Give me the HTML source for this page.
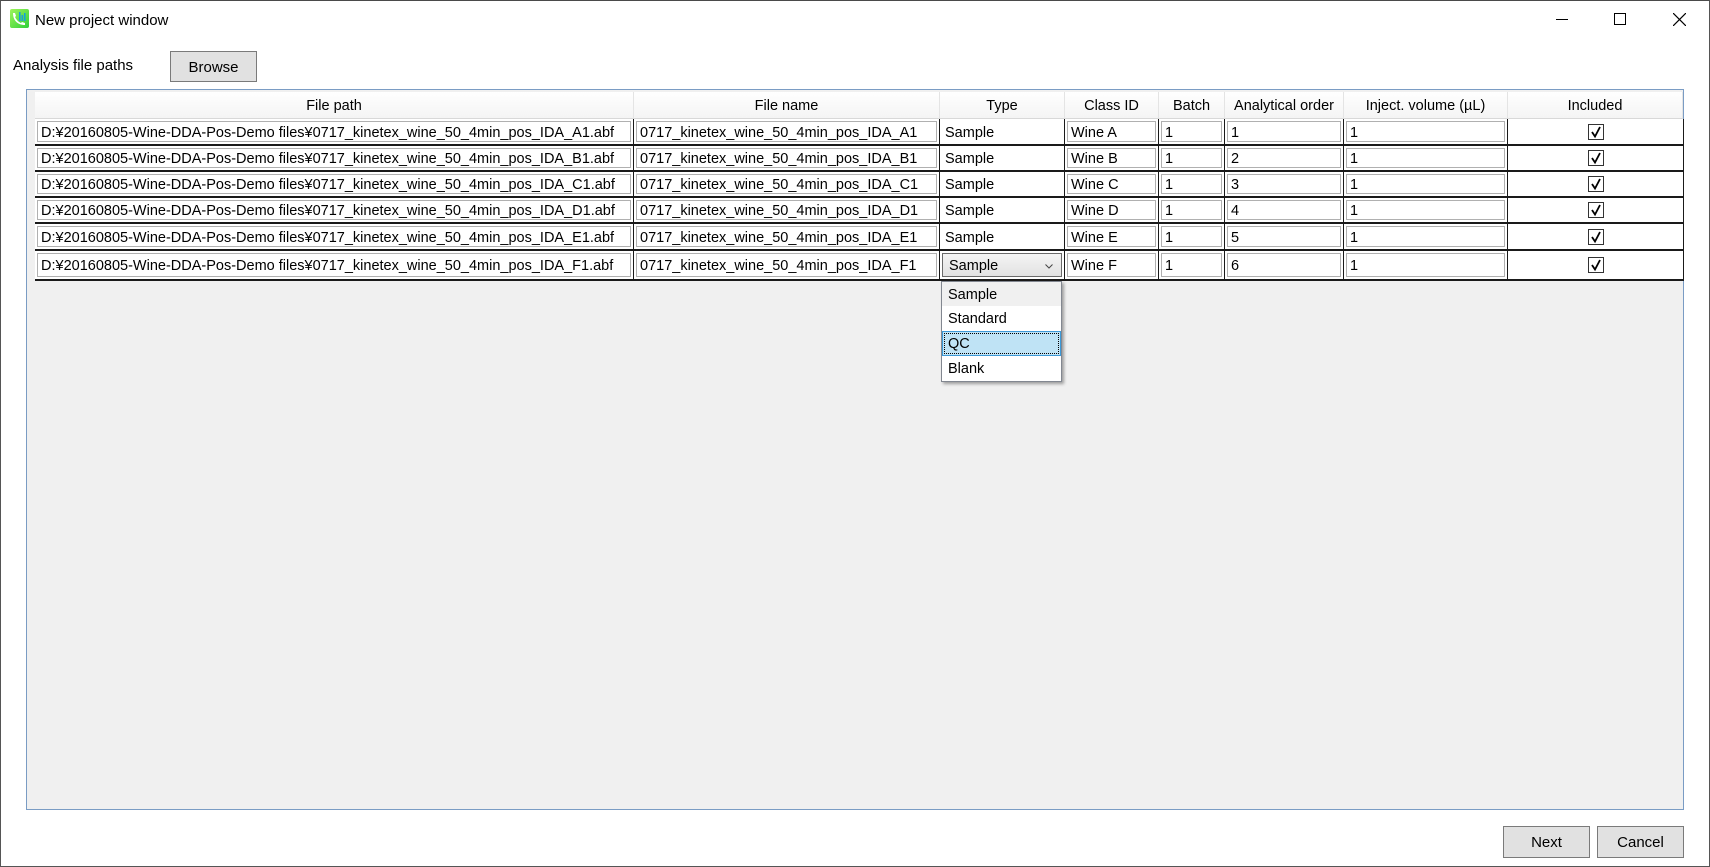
<!DOCTYPE html>
<html><head><meta charset="utf-8"><style>
*{box-sizing:border-box;margin:0;padding:0}
body{width:1710px;height:867px;overflow:hidden;background:#fff;font-family:"Liberation Sans","Noto Sans CJK JP",sans-serif;font-size:14.5px;color:#000;position:relative}
.win{position:absolute;left:0;top:0;width:1710px;height:867px;border:1px solid #555;border-top:1px solid #4a4a4a;background:#fff}
.abs{position:absolute}
.btn{position:absolute;background:#e1e1e1;border:1px solid #7a7a7a;text-align:center;font-size:15px}
.grid{position:absolute;left:26px;top:89px;width:1658px;height:721px;border:1px solid #7a9cc4;background:#f0f0f0}
.hdr{position:absolute;top:92px;height:27px;background:linear-gradient(#fff,#f4f4f4);border-right:1px solid #e4e4e4;border-bottom:1px solid #d8d8d8;text-align:center;line-height:29px;font-size:14.5px}
.row{position:absolute;left:35px;width:1649px;border-bottom:2px solid #1a1a1a}
.c{position:absolute;top:0;bottom:0;border-right:1px solid #1a1a1a;background:#fff}
.c span{position:absolute;left:2px;right:2px;top:2px;bottom:2px;border:1px solid #b0b0b0;background:#fff;padding-left:3px;padding-top:2px;white-space:nowrap;overflow:hidden;display:flex;align-items:center}
.c.t span{border:none}
.cb{position:absolute;left:50%;top:50%;width:16px;height:16px;margin:-8px 0 0 -8px;border:1px solid #333;background:#fff}
</style></head><body>
<div class="win"></div>
<svg class="abs" style="left:10px;top:9px" width="19" height="19" viewBox="0 0 19 19"><defs><linearGradient id="g" x1="0" y1="0" x2="1" y2="1"><stop offset="0" stop-color="#9ff55a"/><stop offset="1" stop-color="#2fcf3a"/></linearGradient></defs><rect width="19" height="19" rx="2" fill="url(#g)"/><rect x="9" y="3" width="1.6" height="9" fill="#1aa0d8"/><rect x="11.5" y="6" width="1.6" height="6" fill="#1aa0d8"/><rect x="14" y="4" width="1.6" height="8" fill="#1aa0d8"/><path d="M3 4c0 7 4 12 12 12l0-2-3-1-1 1c-3-1-5-4-6-6l1-1-1-3z" fill="#fff"/></svg>
<div class="abs" style="left:35px;top:12px;font-size:15px">New project window</div>
<div class="abs" style="left:1556px;top:19px;width:12px;height:1px;background:#000"></div>
<div class="abs" style="left:1614px;top:13px;width:12px;height:12px;border:1px solid #000"></div>
<svg class="abs" style="left:1673px;top:13px" width="13" height="13"><path d="M0 0L13 13M13 0L0 13" stroke="#000" stroke-width="1.2"/></svg>
<div class="abs" style="left:13px;top:57px;font-size:15px">Analysis file paths</div>
<div class="btn" style="left:170px;top:51px;width:87px;height:31px;line-height:31px">Browse</div>
<div class="grid"></div>
<div class="hdr" style="left:35px;width:599px">File path</div>
<div class="hdr" style="left:634px;width:306px">File name</div>
<div class="hdr" style="left:940px;width:125px">Type</div>
<div class="hdr" style="left:1065px;width:94px">Class ID</div>
<div class="hdr" style="left:1159px;width:66px">Batch</div>
<div class="hdr" style="left:1225px;width:119px">Analytical order</div>
<div class="hdr" style="left:1344px;width:164px">Inject. volume (µL)</div>
<div class="hdr" style="left:1508px;width:175px">Included</div>

<div class="row" style="top:119px;height:27px">
<div class="c" style="left:0;width:599px"><span>D:¥20160805-Wine-DDA-Pos-Demo files¥0717_kinetex_wine_50_4min_pos_IDA_A1.abf</span></div>
<div class="c" style="left:599px;width:306px"><span>0717_kinetex_wine_50_4min_pos_IDA_A1</span></div>
<div class="c t" style="left:905px;width:125px"><span>Sample</span></div>
<div class="c" style="left:1030px;width:94px"><span>Wine A</span></div>
<div class="c" style="left:1124px;width:66px"><span>1</span></div>
<div class="c" style="left:1190px;width:119px"><span>1</span></div>
<div class="c" style="left:1309px;width:164px"><span>1</span></div>
<div class="c" style="left:1473px;width:176px"><div class="cb"><svg width="14" height="14"><path d="M3 7l3 4.5 5-9.5" stroke="#000" stroke-width="1.8" fill="none"/></svg></div></div>
</div>
<div class="row" style="top:146px;height:26px">
<div class="c" style="left:0;width:599px"><span>D:¥20160805-Wine-DDA-Pos-Demo files¥0717_kinetex_wine_50_4min_pos_IDA_B1.abf</span></div>
<div class="c" style="left:599px;width:306px"><span>0717_kinetex_wine_50_4min_pos_IDA_B1</span></div>
<div class="c t" style="left:905px;width:125px"><span>Sample</span></div>
<div class="c" style="left:1030px;width:94px"><span>Wine B</span></div>
<div class="c" style="left:1124px;width:66px"><span>1</span></div>
<div class="c" style="left:1190px;width:119px"><span>2</span></div>
<div class="c" style="left:1309px;width:164px"><span>1</span></div>
<div class="c" style="left:1473px;width:176px"><div class="cb"><svg width="14" height="14"><path d="M3 7l3 4.5 5-9.5" stroke="#000" stroke-width="1.8" fill="none"/></svg></div></div>
</div>
<div class="row" style="top:172px;height:26px">
<div class="c" style="left:0;width:599px"><span>D:¥20160805-Wine-DDA-Pos-Demo files¥0717_kinetex_wine_50_4min_pos_IDA_C1.abf</span></div>
<div class="c" style="left:599px;width:306px"><span>0717_kinetex_wine_50_4min_pos_IDA_C1</span></div>
<div class="c t" style="left:905px;width:125px"><span>Sample</span></div>
<div class="c" style="left:1030px;width:94px"><span>Wine C</span></div>
<div class="c" style="left:1124px;width:66px"><span>1</span></div>
<div class="c" style="left:1190px;width:119px"><span>3</span></div>
<div class="c" style="left:1309px;width:164px"><span>1</span></div>
<div class="c" style="left:1473px;width:176px"><div class="cb"><svg width="14" height="14"><path d="M3 7l3 4.5 5-9.5" stroke="#000" stroke-width="1.8" fill="none"/></svg></div></div>
</div>
<div class="row" style="top:198px;height:26px">
<div class="c" style="left:0;width:599px"><span>D:¥20160805-Wine-DDA-Pos-Demo files¥0717_kinetex_wine_50_4min_pos_IDA_D1.abf</span></div>
<div class="c" style="left:599px;width:306px"><span>0717_kinetex_wine_50_4min_pos_IDA_D1</span></div>
<div class="c t" style="left:905px;width:125px"><span>Sample</span></div>
<div class="c" style="left:1030px;width:94px"><span>Wine D</span></div>
<div class="c" style="left:1124px;width:66px"><span>1</span></div>
<div class="c" style="left:1190px;width:119px"><span>4</span></div>
<div class="c" style="left:1309px;width:164px"><span>1</span></div>
<div class="c" style="left:1473px;width:176px"><div class="cb"><svg width="14" height="14"><path d="M3 7l3 4.5 5-9.5" stroke="#000" stroke-width="1.8" fill="none"/></svg></div></div>
</div>
<div class="row" style="top:224px;height:27px">
<div class="c" style="left:0;width:599px"><span>D:¥20160805-Wine-DDA-Pos-Demo files¥0717_kinetex_wine_50_4min_pos_IDA_E1.abf</span></div>
<div class="c" style="left:599px;width:306px"><span>0717_kinetex_wine_50_4min_pos_IDA_E1</span></div>
<div class="c t" style="left:905px;width:125px"><span>Sample</span></div>
<div class="c" style="left:1030px;width:94px"><span>Wine E</span></div>
<div class="c" style="left:1124px;width:66px"><span>1</span></div>
<div class="c" style="left:1190px;width:119px"><span>5</span></div>
<div class="c" style="left:1309px;width:164px"><span>1</span></div>
<div class="c" style="left:1473px;width:176px"><div class="cb"><svg width="14" height="14"><path d="M3 7l3 4.5 5-9.5" stroke="#000" stroke-width="1.8" fill="none"/></svg></div></div>
</div>
<div class="row" style="top:251px;height:30px">
<div class="c" style="left:0;width:599px"><span>D:¥20160805-Wine-DDA-Pos-Demo files¥0717_kinetex_wine_50_4min_pos_IDA_F1.abf</span></div>
<div class="c" style="left:599px;width:306px"><span>0717_kinetex_wine_50_4min_pos_IDA_F1</span></div>
<div class="c" style="left:905px;width:125px"><span style="background:linear-gradient(#f4f4f4,#e2e2e2);border:1px solid #6a6a6a;padding-left:6px">Sample<svg style="position:absolute;right:8px;top:10px" width="8" height="5"><path d="M0.5 0.5L4 4 7.5 0.5" stroke="#444" fill="none"/></svg></span></div>
<div class="c" style="left:1030px;width:94px"><span>Wine F</span></div>
<div class="c" style="left:1124px;width:66px"><span>1</span></div>
<div class="c" style="left:1190px;width:119px"><span>6</span></div>
<div class="c" style="left:1309px;width:164px"><span>1</span></div>
<div class="c" style="left:1473px;width:176px"><div class="cb"><svg width="14" height="14"><path d="M3 7l3 4.5 5-9.5" stroke="#000" stroke-width="1.8" fill="none"/></svg></div></div>
</div>
<div class="abs" style="left:941px;top:281px;width:121px;height:101px;background:#fff;border:1px solid #828790;box-shadow:2px 2px 3px rgba(0,0,0,.35)">
<div class="abs" style="left:0;top:0;width:119px;height:24px;background:#f0f0f0;padding-left:6px;line-height:26px">Sample</div>
<div class="abs" style="left:0;top:24px;width:119px;height:25px;padding-left:6px;line-height:27px">Standard</div>
<div class="abs" style="left:0;top:49px;width:119px;height:25px;background:#bfe3f5;border:1px solid #3d9ad8;padding-left:5px;line-height:25px"><div class="abs" style="left:1px;top:1px;right:1px;bottom:1px;border:1px dotted #000"></div>QC</div>
<div class="abs" style="left:0;top:74px;width:119px;height:25px;padding-left:6px;line-height:27px">Blank</div>
</div>
<div class="btn" style="left:1503px;top:826px;width:87px;height:32px;line-height:32px">Next</div>
<div class="btn" style="left:1597px;top:826px;width:87px;height:32px;line-height:32px">Cancel</div>
</body></html>
